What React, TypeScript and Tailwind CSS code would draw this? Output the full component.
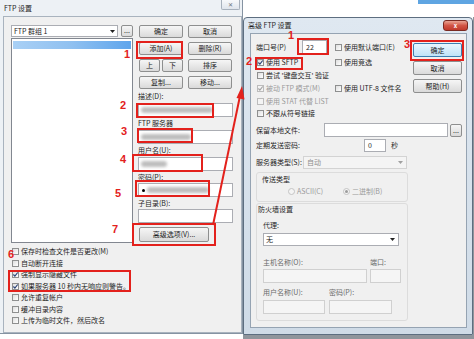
import React from "react";

const TXT = "text-[7px] leading-none";

function Btn({ children, className = "", focus = false }: { children?: React.ReactNode; className?: string; focus?: boolean }) {
  return (
    <div
      className={`flex items-center justify-center rounded-[2px] border text-[7px] leading-none text-[#1b1b1b] ${
        focus
          ? "border-[#3c7fb1] bg-gradient-to-b from-[#eaf6fd] to-[#bfe3f8]"
          : "border-[#8e8f8f] bg-gradient-to-b from-[#f6f6f6] to-[#dadada]"
      } ${className}`}
    >
      {children}
    </div>
  );
}

function Check({ checked = false, disabled = false }: { checked?: boolean; disabled?: boolean }) {
  return (
    <div
      className={`relative h-[7px] w-[7px] shrink-0 border ${
        disabled ? "border-[#bcbcbc] bg-[#f4f4f4]" : "border-[#8e8f8f] bg-gradient-to-br from-[#dedede] to-white"
      }`}
    >
      {checked && (
        <svg viewBox="0 0 7 7" className="absolute left-[-1px] top-[-1px] h-[7px] w-[7px]">
          <path d="M1.4 3.5 L2.9 5.1 L5.7 1.5" fill="none" stroke={disabled ? "#a0a0a0" : "#253f74"} strokeWidth="1.1" />
        </svg>
      )}
    </div>
  );
}

function CheckRow({
  label,
  checked = false,
  disabled = false,
  className = "",
}: {
  label: string;
  checked?: boolean;
  disabled?: boolean;
  className?: string;
}) {
  return (
    <div className={`flex items-center ${className}`}>
      <Check checked={checked} disabled={disabled} />
      <span className={`ml-[2px] whitespace-nowrap ${disabled ? "text-[#9a9a9a]" : "text-[#1e1e1e]"}`}>{label}</span>
    </div>
  );
}

function Input({ className = "", children, disabled = false }: { className?: string; children?: React.ReactNode; disabled?: boolean }) {
  return (
    <div
      className={`relative flex items-center overflow-hidden border ${
        disabled ? "border-[#d0d0d0] bg-[#f5f5f5]" : "border-[#abadb3] bg-white"
      } ${className}`}
    >
      {children}
    </div>
  );
}

function Blur({ className = "" }: { className?: string }) {
  return <div className={`h-[6px] rounded-full bg-[#bdbdbd] blur-[1.5px] ${className}`} />;
}

function Radio({ checked = false }: { checked?: boolean }) {
  return (
    <div className="flex h-[7px] w-[7px] shrink-0 items-center justify-center rounded-full border border-[#c4c4c4] bg-[#f4f4f4]">
      {checked && <div className="h-[3px] w-[3px] rounded-full bg-[#9c9c9c]" />}
    </div>
  );
}

function Arrow() {
  return (
    <svg viewBox="0 0 5 3" className="h-[3px] w-[5px]">
      <path d="M0 0 L5 0 L2.5 3 Z" fill="#222" />
    </svg>
  );
}

function RedBox({ className }: { className: string }) {
  return <div className={`pointer-events-none absolute border-2 border-[#e3211c] ${className}`} />;
}

function RedNum({ n, className }: { n: string; className: string }) {
  return (
    <div
      className={`absolute font-['Liberation_Sans',Arial,sans-serif] text-[11px] font-bold leading-none text-[#e3211c] ${className}`}
    >
      {n}
    </div>
  );
}

function LeftWindow() {
  return (
    <div className="absolute left-0 top-0 flex h-[334px] w-[243px] flex-col border-b border-r border-[#8593a2] bg-[#edf1f5]">
      <div className="relative flex h-[16px] shrink-0 items-center pl-[4px] text-[#1e1e1e]">
        <span className={TXT}>FTP 设置</span>
        <div className="absolute right-[2px] top-0 flex h-[10px] w-[19px] items-center justify-center rounded-b-[2px] border border-t-0 border-[#a7b1bc] bg-gradient-to-b from-[#f7f9fb] to-[#dfe5ec] text-[6px] text-[#6b7480]">
          ✕
        </div>
      </div>
      <div className="mb-[0px] ml-[3px] mr-[0px] flex flex-1 flex-col border border-[#a9b3be] bg-[#f0f0f0] pl-[7px] pt-[8px]">
        <div className="flex">
          {/* left column */}
          <div className="flex w-[122px] flex-col">
            <div className="flex h-[12px]">
              <div className="flex w-[107px] items-center justify-between border border-[#abadb3] bg-white pl-[2px] pr-[2px]">
                <span className="text-[#1e1e1e]">FTP 群组 1</span>
                <Arrow />
              </div>
              <Btn className="ml-[3px] w-[12px] items-end pb-[2px]">...</Btn>
            </div>
            <div className="mt-[1px] h-[205px] border border-[#828790] bg-white px-[1px] pt-[2px]">
              <div className="h-[8px] bg-gradient-to-r from-[#a9d0f5] via-[#8fc0f0] to-[#5ea5ec]" />
            </div>
          </div>
          {/* right column */}
          <div className="ml-[5px] flex w-[96px] flex-col">
            <div className="grid grid-cols-[44px_44px] gap-x-[5px] gap-y-[4px] pl-[1px]">
              <Btn className="h-[13px]">确定</Btn>
              <Btn className="h-[13px]">取消</Btn>
              <Btn className="h-[13px]">添加(A)</Btn>
              <Btn className="h-[13px]">删除(R)</Btn>
              <div className="flex h-[13px] gap-[2px]">
                <Btn className="w-[21px]">上</Btn>
                <Btn className="w-[21px]">下</Btn>
              </div>
              <Btn className="h-[13px]">排序</Btn>
              <Btn className="h-[13px]">复制...</Btn>
              <Btn className="h-[13px]">移动...</Btn>
            </div>
            <div className="mt-[1px] flex h-[13px] items-center text-[#1e1e1e]">描述(D):</div>
            <Input className="h-[14px] w-[95px] pl-[2px]">
              <Blur className="w-[72px]" />
            </Input>
            <div className="flex h-[13px] items-center text-[#1e1e1e]">FTP 服务器</div>
            <Input className="h-[14px] w-[95px] pl-[2px]">
              <Blur className="w-[50px]" />
            </Input>
            <div className="flex h-[13px] items-center text-[#1e1e1e]">用户名(U):</div>
            <Input className="h-[14px] w-[95px] pl-[2px]">
              <Blur className="w-[26px]" />
            </Input>
            <div className="flex h-[12px] items-center text-[#1e1e1e]">密码(P):</div>
            <Input className="h-[14px] w-[95px] pl-[3px]">
              <div className="h-[3px] w-[3px] rounded-full bg-black" />
              <Blur className="ml-[2px] w-[62px]" />
            </Input>
            <div className="flex h-[12px] items-center text-[#1e1e1e]">子目录(B):</div>
            <Input className="h-[14px] w-[95px]" />
            <Btn className="ml-[1px] mt-[4px] h-[15px] w-[70px]">高级选项(V)...</Btn>
          </div>
        </div>
        {/* checkboxes */}
        <div className="mt-[3px] flex flex-col pl-[1px]">
          <CheckRow className="h-[11px]" label="保存时检查文件是否更改(M)" />
          <CheckRow className="h-[12px]" label="自动断开连接" />
          <CheckRow className="h-[11px]" label="强制显示隐藏文件" checked />
          <CheckRow className="h-[12px]" label="如果服务器 10 秒内无响应则警告。" checked />
          <CheckRow className="h-[11px]" label="允许重复帐户" />
          <CheckRow className="h-[12px]" label="缓冲目录内容" />
          <CheckRow className="h-[11px]" label="上传为临时文件，然后改名" />
        </div>
      </div>
    </div>
  );
}

function RightWindow() {
  return (
    <div className="absolute left-[243px] top-[17px] flex h-[318px] w-[230px] flex-col rounded-t-[4px] border border-[#5d6e80] bg-gradient-to-b from-[#dfe8f1] to-[#cfdbe7]">
      <div className="flex h-[15px] shrink-0 items-center justify-between pl-[4px] pr-[4px]">
        <span className="text-[#1e1e1e]">高级 FTP 设置</span>
        <div className="flex h-[11px] w-[25px] items-center justify-center rounded-[3px] border border-[#7a2a22] bg-gradient-to-b from-[#e8a293] via-[#d25546] to-[#c0392b] text-[6px] font-bold text-white">
          x
        </div>
      </div>
      <div className="mb-[6px] ml-[6px] mr-[5px] flex flex-1 flex-col border border-[#95a3b2] bg-[#f0f0f0] pl-[5px]">
        <div className="flex">
          <div className="flex flex-1 flex-col">
            <div className="mt-[6px] flex h-[15px] items-center">
              <span className="w-[46px] text-[#1e1e1e]">端口号(P)</span>
              <Input className="h-[15px] w-[25px] pl-[3px]">
                <span className="text-[#1e1e1e]">22</span>
              </Input>
              <CheckRow className="ml-[8px]" label="使用默认端口(E)" />
            </div>
            <div className="mt-[1px] flex h-[13px] items-center pl-[1px]">
              <CheckRow className="w-[78px]" label="使用 SFTP" checked />
              <CheckRow label="使用竞选" />
            </div>
            <div className="flex h-[13px] items-center pl-[1px]">
              <CheckRow label="尝试 '键盘交互' 验证" />
            </div>
            <div className="flex h-[13px] items-center pl-[1px]">
              <CheckRow className="w-[78px]" label="被动 FTP 模式(M)" checked disabled />
              <CheckRow label="使用 UTF-8 文件名" />
            </div>
            <div className="flex h-[12px] items-center pl-[1px]">
              <CheckRow label="使用 STAT 代替 LIST" disabled />
            </div>
            <div className="flex h-[13px] items-center pl-[1px]">
              <CheckRow label="不跟从符号链接" />
            </div>
          </div>
          <div className="mr-[4px] flex w-[49px] flex-col gap-[4px] pt-[9px]">
            <Btn className="h-[14px]" focus>
              确定
            </Btn>
            <Btn className="h-[14px]">取消</Btn>
            <Btn className="h-[14px]">帮助(H)</Btn>
          </div>
        </div>
        <div className="mt-[3px] flex h-[14px] items-center">
          <span className="w-[68px] text-[#1e1e1e]">保留本地文件:</span>
          <Input className="h-[14px] w-[124px]" />
          <Btn className="ml-[2px] h-[13px] w-[12px] items-end pb-[2px]">...</Btn>
        </div>
        <div className="mt-[2px] flex h-[13px] items-center">
          <span className="w-[108px] text-[#1e1e1e]">定期发送密码:</span>
          <Input className="h-[13px] w-[22px] pl-[3px]">
            <span className="text-[#1e1e1e]">0</span>
          </Input>
          <span className="ml-[5px] text-[#1e1e1e]">秒</span>
        </div>
        <div className="mt-[4px] flex h-[13px] items-center">
          <span className="w-[47px] text-[#1e1e1e]">服务器类型(S):</span>
          <div className="flex h-[13px] w-[104px] items-center justify-between border border-[#d3d3d3] bg-[#f4f4f4] pl-[3px] pr-[3px]">
            <span className="text-[#8d8d8d]">自动</span>
            <svg viewBox="0 0 5 3" className="h-[3px] w-[5px]">
              <path d="M0 0 L5 0 L2.5 3 Z" fill="#a0a0a0" />
            </svg>
          </div>
        </div>
        <div className="mt-[3px] flex h-[30px] w-[152px] flex-col rounded-[3px] border border-[#dcdcdc]">
          <div className="flex h-[12px] items-center pl-[5px] text-[#1e1e1e]">传送类型</div>
          <div className="flex h-[12px] items-center pl-[31px]">
            <Radio />
            <span className="ml-[2px] w-[46px] text-[#9a9a9a]">ASCII(C)</span>
            <Radio checked />
            <span className="ml-[2px] text-[#9a9a9a]">二进制(B)</span>
          </div>
        </div>
        <div className="mt-[1px] flex h-[118px] w-[152px] flex-col rounded-[3px] border border-[#dcdcdc]">
          <div className="flex h-[10px] items-center pl-[1px] text-[#1e1e1e]">防火墙设置</div>
          <div className="mt-[6px] flex h-[10px] items-center pl-[6px] text-[#1e1e1e]">代理:</div>
          <div className="ml-[6px] mt-[3px] flex h-[13px] w-[136px] items-center justify-between border border-[#abadb3] bg-white pl-[2px] pr-[3px]">
            <span className="text-[#1e1e1e]">无</span>
            <Arrow />
          </div>
          <div className="mt-[11px] flex h-[10px] items-center pl-[6px] text-[#6a6a6a]">
            <span className="w-[107px]">主机名称(O):</span>
            <span>端口:</span>
          </div>
          <div className="ml-[6px] mt-[2px] flex h-[14px]">
            <Input className="h-[14px] w-[104px]" disabled />
            <Input className="ml-[3px] h-[14px] w-[31px]" disabled />
          </div>
          <div className="mt-[4px] flex h-[10px] items-center pl-[6px] text-[#6a6a6a]">
            <span className="w-[66px]">用户名称(U):</span>
            <span>密码(P):</span>
          </div>
          <div className="ml-[6px] mt-[3px] flex h-[14px]">
            <Input className="h-[14px] w-[62px]" disabled />
            <Input className="ml-[4px] h-[14px] w-[63px]" disabled />
          </div>
        </div>
      </div>
    </div>
  );
}

export default function App() {
  return (
    <div
      className={`relative h-[339px] w-[474px] overflow-hidden bg-white font-['Noto_Sans_CJK_SC','Noto_Sans',sans-serif] ${TXT}`}
    >
      {/* desktop bits */}
      <div className="absolute left-[418px] top-0 h-[4px] w-[56px] bg-[#5fa5e2]" />
      <div className="absolute bottom-0 left-[243px] h-[4px] w-[231px] bg-[#8f959c]" />
      <div className="absolute right-0 top-[17px] h-[322px] w-[1px] bg-[#8f959c]" />

      <LeftWindow />
      <RightWindow />

      {/* annotations */}
      <RedBox className="left-[136px] top-[41px] h-[18px] w-[47px]" />
      <RedNum n="1" className="left-[124px] top-[49px]" />
      <RedBox className="left-[136px] top-[103px] h-[15px] w-[78px]" />
      <RedNum n="2" className="left-[120px] top-[100px]" />
      <RedBox className="left-[137px] top-[128px] h-[15px] w-[56px]" />
      <RedNum n="3" className="left-[121px] top-[126px]" />
      <RedBox className="left-[132px] top-[154px] h-[18px] w-[71px]" />
      <RedNum n="4" className="left-[120px] top-[154px]" />
      <RedBox className="left-[135px] top-[180px] h-[17px] w-[75px]" />
      <RedNum n="5" className="left-[115px] top-[188px]" />
      <RedBox className="left-[132px] top-[223px] h-[23px] w-[84px]" />
      <RedNum n="7" className="left-[112px] top-[224px]" />
      <RedNum n="6" className="left-[8px] top-[249px]" />
      <RedBox className="left-[8px] top-[270px] h-[22px] w-[123px]" />

      <RedBox className="left-[297px] top-[38px] h-[17px] w-[32px]" />
      <RedNum n="1" className="left-[288px] top-[30px]" />
      <RedBox className="left-[255px] top-[57px] h-[13px] w-[48px]" />
      <RedNum n="2" className="left-[246px] top-[56px]" />
      <RedBox className="left-[410px] top-[40px] h-[21px] w-[54px]" />
      <RedNum n="3" className="left-[404px] top-[39px]" />

      <svg className="pointer-events-none absolute left-0 top-0 h-[339px] w-[474px]" viewBox="0 0 474 339">
        <line x1="213" y1="225" x2="240" y2="96" stroke="#e3211c" strokeWidth="2" />
        <path d="M242 86 L236.5 98 L244.5 99.5 Z" fill="#e3211c" />
      </svg>
    </div>
  );
}
